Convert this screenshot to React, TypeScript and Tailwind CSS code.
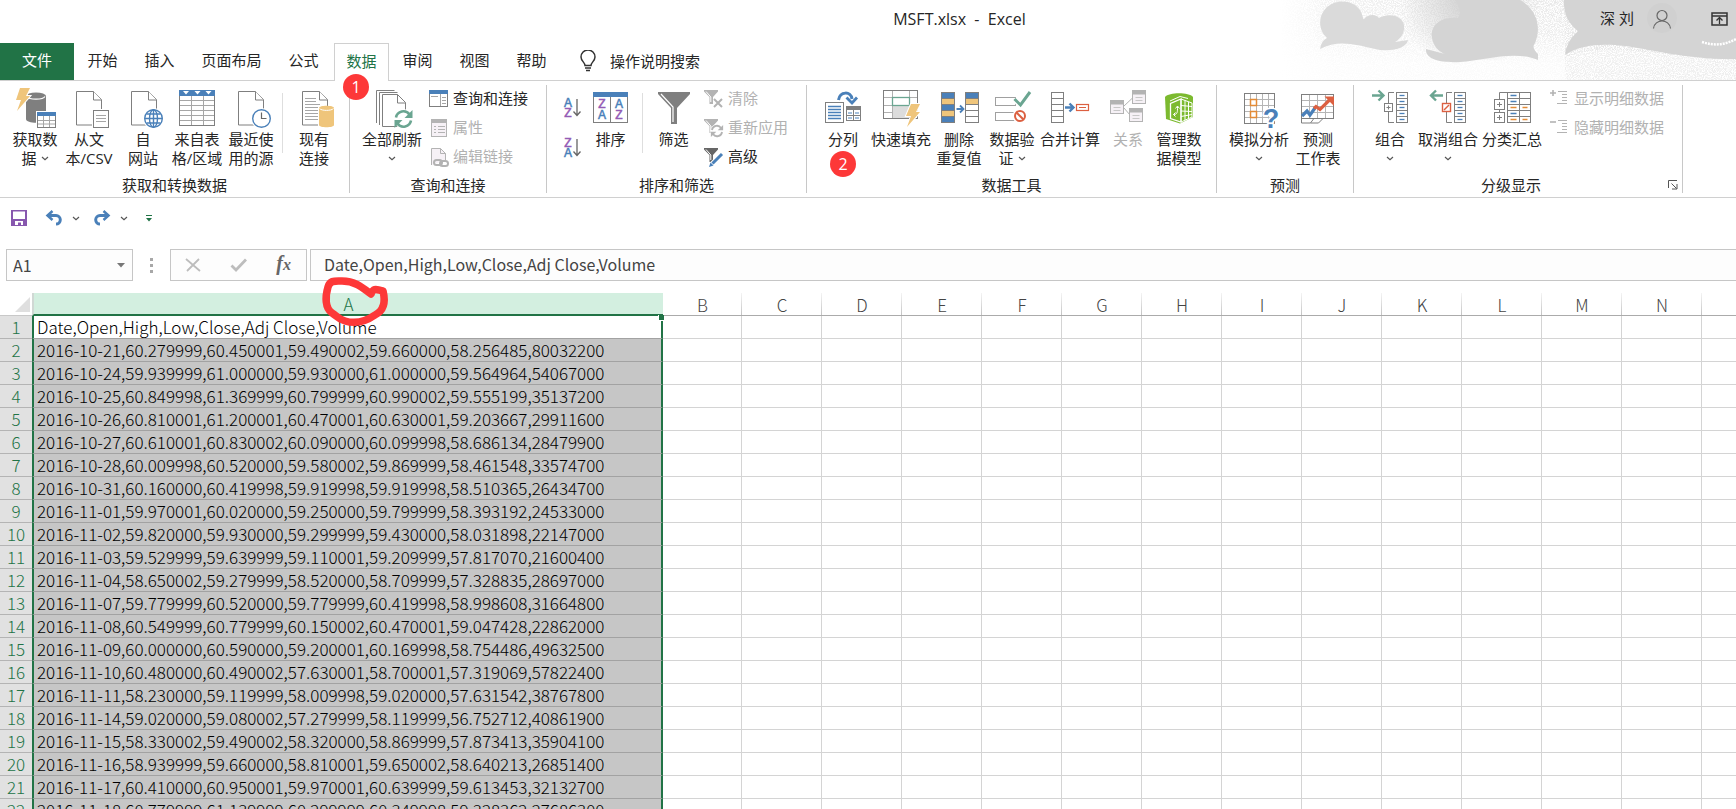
import type { ReactNode } from "react";

const TABS = ["开始", "插入", "页面布局", "公式", "数据", "审阅", "视图", "帮助"];

const COLUMNS = ["B", "C", "D", "E", "F", "G", "H", "I", "J", "K", "L", "M", "N", "O"];

const ROWS = [
  "Date,Open,High,Low,Close,Adj Close,Volume",
  "2016-10-21,60.279999,60.450001,59.490002,59.660000,58.256485,80032200",
  "2016-10-24,59.939999,61.000000,59.930000,61.000000,59.564964,54067000",
  "2016-10-25,60.849998,61.369999,60.799999,60.990002,59.555199,35137200",
  "2016-10-26,60.810001,61.200001,60.470001,60.630001,59.203667,29911600",
  "2016-10-27,60.610001,60.830002,60.090000,60.099998,58.686134,28479900",
  "2016-10-28,60.009998,60.520000,59.580002,59.869999,58.461548,33574700",
  "2016-10-31,60.160000,60.419998,59.919998,59.919998,58.510365,26434700",
  "2016-11-01,59.970001,60.020000,59.250000,59.799999,58.393192,24533000",
  "2016-11-02,59.820000,59.930000,59.299999,59.430000,58.031898,22147000",
  "2016-11-03,59.529999,59.639999,59.110001,59.209999,57.817070,21600400",
  "2016-11-04,58.650002,59.279999,58.520000,58.709999,57.328835,28697000",
  "2016-11-07,59.779999,60.520000,59.779999,60.419998,58.998608,31664800",
  "2016-11-08,60.549999,60.779999,60.150002,60.470001,59.047428,22862000",
  "2016-11-09,60.000000,60.590000,59.200001,60.169998,58.754486,49632500",
  "2016-11-10,60.480000,60.490002,57.630001,58.700001,57.319069,57822400",
  "2016-11-11,58.230000,59.119999,58.009998,59.020000,57.631542,38767800",
  "2016-11-14,59.020000,59.080002,57.279999,58.119999,56.752712,40861900",
  "2016-11-15,58.330002,59.490002,58.320000,58.869999,57.873413,35904100",
  "2016-11-16,58.939999,59.660000,58.810001,59.650002,58.640213,26851400",
  "2016-11-17,60.410000,60.950001,59.970001,60.639999,59.613453,32132700",
  "2016-11-18,60.779999,61.139999,60.299999,60.349998,59.328362,27686300",
];

const GRAY = "#7f7f7f";
const GOLD = "#efc57b";
const BLUE = "#4a80b9";
const GREEN = "#6aa591";
const RED = "#dc6041";
const ORANGE = "#e38b36";
const PURPLE = "#945bb5";
const MUTED = "#b3b3b3";

function Icon({ size = 40, children }: { size?: number; children: ReactNode }) {
  return (
    <svg
      width={size}
      height={size}
      viewBox={`0 0 ${size} ${size}`}
      fill="none"
      className="shrink-0 overflow-visible"
      aria-hidden="true"
    >
      {children}
    </svg>
  );
}

function Chevron() {
  return (
    <svg width="8" height="5" viewBox="0 0 8 5" fill="none" className="shrink-0" aria-hidden="true">
      <path d="M1 1l3 2.6L7 1" stroke="#555" strokeWidth="1.2" />
    </svg>
  );
}

function Page({ x = 7.5 }: { x?: number }) {
  return (
    <g transform={`translate(${x} 0)`} stroke={GRAY} fill="#fff">
      <path d="M0 3.5h17l8 8V37H0z" />
      <path d="M17 3.5v8.500h8" />
    </g>
  );
}

function Bolt({ x, y }: { x: number; y: number }) {
  return (
    <path
      transform={`translate(${x} ${y})`}
      d="M6 0h9l-4 8h4L2 23l4-11H1z"
      fill={GOLD}
      stroke="#fff"
      strokeWidth="2"
      paintOrder="stroke"
    />
  );
}

function RefreshArrows({ x, y, color, scale = 1 }: { x: number; y: number; color: string; scale?: number }) {
  return (
    <g transform={`translate(${x} ${y}) scale(${scale})`}>
      <circle r="10" fill="#fff" />
      <path d="M-7.500-1.500A7.500 7.500 0 0 1 6-4.500M7.500 1.500A7.500 7.500 0 0 1-6 4.500" stroke={color} strokeWidth="2.600" />
      <path d="M9-9v8H1zM-9 9V1h8z" fill={color} />
    </g>
  );
}

// A vertical strip of five equal cells, each with its own fill or a centre dash.
function Strip({ x, width, fills, dash }: { x: number; width: number; fills?: string[]; dash?: string }) {
  return (
    <g>
      {[0, 1, 2, 3, 4].map((i) => (
        <g key={i}>
          <rect x={x} y={4.5 + i * 6} width={width} height="6" fill={fills?.[i] ?? "#fff"} stroke={GRAY} />
          {dash && <path d={`M${x + 3} ${7.5 + i * 6}h${width - 6}`} stroke={dash} strokeWidth="1.300" />}
        </g>
      ))}
    </g>
  );
}

function GetDataIcon() {
  return (
    <Icon>
      <path d="M11 8v23c0 5 20 5 20 0V8z" fill={GRAY} />
      <ellipse cx="21" cy="8" rx="10" ry="3.500" fill={GRAY} />
      <path d="M12 8.500c2 3.500 16 3.500 18 0" stroke="#fff" strokeWidth="1.200" />
      <path d="M5 0h10l-4 8h4L2 23l4-11H1z" fill={GOLD} stroke="#fff" strokeWidth="2" paintOrder="stroke" />
      <rect x="21" y="23" width="21" height="18" fill="#fff" />
      <rect x="22.500" y="24.500" width="18" height="15" stroke={GRAY} />
      <path d="M22 24h19v4H22z" fill={BLUE} />
      <path d="M28.500 28v11M34.500 28v11M23 32.500h17M23 36h17" stroke="#a6a6a6" />
    </Icon>
  );
}

function CsvIcon() {
  return (
    <Icon>
      <Page />
      <rect x="23" y="21" width="18" height="20" fill="#fff" />
      <rect x="24.500" y="22.500" width="15" height="17" stroke={GRAY} />
      <path d="M27 27.500h10M27 30.500h10M27 33.500h10" stroke="#a6a6a6" />
    </Icon>
  );
}

function WebIcon() {
  return (
    <Icon>
      <Page x={8.5} />
      <circle cx="30.500" cy="30.500" r="10.500" fill="#fff" />
      <g stroke={BLUE} strokeWidth="1.400">
        <circle cx="30.500" cy="30.500" r="8.800" />
        <ellipse cx="30.500" cy="30.500" rx="4" ry="8.800" />
        <path d="M30.500 22v17M22 30.500h17M23.500 26h14M23.500 35h14" />
      </g>
    </Icon>
  );
}

function TableIcon() {
  return (
    <Icon>
      <rect x="2.500" y="2.500" width="35" height="35" fill="#fff" stroke={GRAY} />
      <path d="M14.500 8v29M26.500 8v29M3 12.500h34M3 17.500h34M3 22.500h34M3 27.500h34M3 32.500h34" stroke="#a6a6a6" />
      <path d="M2 2h36v6H2z" fill={BLUE} />
      <path d="M6 3h6L9 6.500zM17.500 3h6l-3 3.500zM28.500 3h6l-3 3.500z" fill="#fff" />
    </Icon>
  );
}

function RecentIcon() {
  return (
    <Icon>
      <Page />
      <circle cx="30.500" cy="30.500" r="10.500" fill="#fff" />
      <circle cx="30.500" cy="30.500" r="8.800" stroke={BLUE} strokeWidth="1.400" />
      <path d="M30.500 24.500v6h5" stroke="#666" strokeWidth="1.200" />
    </Icon>
  );
}

function ConnectionsIcon() {
  return (
    <Icon>
      <Page x={8.5} />
      <path d="M11 10.500h11M11 13.500h11M11 16.500h15M11 19.500h13M11 22.500h13M11 25.500h13M11 28.500h13M11 31.500h13" stroke="#a6a6a6" />
      <path d="M24 20v18c0 4 17 4 17 0V20z" fill="#fff" />
      <path d="M25 20v17c0 3 15 3 15 0V20c0-3-15-3-15 0z" fill={GOLD} />
      <path d="M25.500 20.500c2 2.500 12 2.500 14 0" stroke="#fff" />
    </Icon>
  );
}

function RefreshAllIcon() {
  return (
    <Icon>
      <path d="M4.500 35V2.500h18M7.500 37V4.500h18" stroke={GRAY} />
      <path d="M10.500 6.500h15l8 8v24h-23z" fill="#fff" stroke={GRAY} />
      <path d="M25.500 6.500v8.500h8" stroke={GRAY} />
      <RefreshArrows x={31.5} y={31} color={GREEN} />
    </Icon>
  );
}

function SortIcon() {
  return (
    <Icon>
      <rect x="2.500" y="4.500" width="34" height="30" fill="#fff" stroke={GRAY} />
      <path d="M2 4h35v5H2z" fill={BLUE} />
      <path d="M19.500 9v25" stroke={GRAY} />
      <g fontFamily="Liberation Sans, sans-serif" fontSize="12" textAnchor="middle" strokeWidth=".5">
        <text x="11" y="20" fill={PURPLE} stroke={PURPLE}>Z</text>
        <text x="11" y="31" fill={BLUE} stroke={BLUE}>A</text>
        <text x="28" y="20" fill={BLUE} stroke={BLUE}>A</text>
        <text x="28" y="31" fill={PURPLE} stroke={PURPLE}>Z</text>
      </g>
    </Icon>
  );
}

function SortDirectionIcon({ descending = false }: { descending?: boolean }) {
  return (
    <Icon size={20}>
      <g fontFamily="Liberation Sans, sans-serif" fontSize="12" textAnchor="middle" strokeWidth=".5">
        <text x="5" y="9" fill={descending ? PURPLE : BLUE} stroke={descending ? PURPLE : BLUE}>
          {descending ? "Z" : "A"}
        </text>
        <text x="5" y="19" fill={descending ? BLUE : PURPLE} stroke={descending ? BLUE : PURPLE}>
          {descending ? "A" : "Z"}
        </text>
      </g>
      <path d="M14 1v16M10.500 13.500l3.500 4 3.500-4" stroke="#666" strokeWidth="1.300" />
    </Icon>
  );
}

function FilterIcon() {
  return (
    <Icon>
      <path d="M4 4h32v2L23 20v16h-6V20L4 6z" fill={GRAY} />
      <path d="M7 6l12 13v15" stroke="#fff" strokeWidth="1.200" />
    </Icon>
  );
}

function SmallFunnel({ color }: { color: string }) {
  return (
    <g>
      <path d="M0 1h14v1.500L9 8v7H5.500V8L0 2.500z" fill={color} />
      <path d="M2 2.500L6.800 8v5" stroke="#fff" />
    </g>
  );
}

function TextToColumnsIcon() {
  return (
    <Icon>
      <rect x="2.500" y="14.500" width="18" height="20" fill="#fff" stroke={GRAY} />
      <path d="M5 18.500h13M5 21.500h13M5 24.500h13M5 27.500h13M5 30.500h13" stroke={BLUE} strokeWidth="1.300" />
      <rect x="23.500" y="18.500" width="14" height="14" fill="#fff" stroke={GRAY} />
      <path d="M23 18h15v4H23z" fill={GRAY} />
      <path d="M30.500 22v10M24 27.500h13" stroke={GRAY} />
      <path d="M25 25h4M32 25h4M25 30h4M32 30h4" stroke={BLUE} />
      <path d="M15.500 12C17 3 28 3 29 11" stroke={BLUE} strokeWidth="3" />
      <path d="M23.500 9.500L29 15l5-5.500" stroke={BLUE} strokeWidth="2.800" />
    </Icon>
  );
}

function FlashFillIcon() {
  return (
    <Icon>
      <rect x="2.500" y="2.500" width="34" height="28" fill="#fff" stroke={GRAY} />
      <path d="M11.500 3v27M28.500 3v27M3 9.500h33M3 17.500h33M3 24.500h8" stroke="#b0b0b0" />
      <path d="M12 18h16v12H12z" fill="#dcdcdc" />
      <rect x="11.500" y="9.500" width="17" height="8" fill="#fff" stroke={GREEN} strokeWidth="1.300" />
      <Bolt x={24} y={16} />
    </Icon>
  );
}

function RemoveDuplicatesIcon() {
  return (
    <Icon>
      <Strip x={2.5} width={13} fills={[BLUE, GOLD, BLUE, GOLD, BLUE]} />
      <Strip x={26.5} width={13} fills={[BLUE, GOLD, "#fff", "#fff", "#fff"]} />
      <path d="M17.500 21h6M21 17.500l3.500 3.500-3.500 3.500" stroke={BLUE} strokeWidth="1.800" />
    </Icon>
  );
}

function ValidationIcon() {
  return (
    <Icon>
      <rect x="3.500" y="9.500" width="20" height="8" fill="#fff" stroke="#a0a0a0" />
      <rect x="3.500" y="24.500" width="20" height="8" fill="#fff" stroke="#a0a0a0" />
      <path d="M22.500 11l6 6L38 4" stroke="#fff" strokeWidth="6" />
      <path d="M22.500 11l6 6L38 4" stroke={GREEN} strokeWidth="3" />
      <circle cx="28" cy="28" r="7.500" fill="#fff" />
      <circle cx="28" cy="28" r="5" stroke={RED} strokeWidth="2" />
      <path d="M24.500 24.500l7 7" stroke={RED} strokeWidth="2" />
    </Icon>
  );
}

function ConsolidateIcon() {
  return (
    <Icon>
      <Strip x={1.5} width={12} />
      <path d="M15 19.500h8M19.500 15.500l4 4-4 4" stroke={BLUE} strokeWidth="2.400" />
      <rect x="26.500" y="16.500" width="12" height="6" fill="#fff" stroke={RED} strokeWidth="1.200" />
      <path d="M29 19.500h7" stroke={RED} />
    </Icon>
  );
}

function RelationshipsIcon() {
  return (
    <Icon>
      <path d="M16 18l8.500-8M16 20l6 7" stroke={MUTED} />
      {[
        [2.5, 12.5],
        [24.5, 2.5],
        [21.5, 20.5],
      ].map(([x, y]) => (
        <g key={x} transform={`translate(${x} ${y})`}>
          <rect width="13" height="13" fill="#f6f1f6" stroke={MUTED} />
          <path d="M-.5-.5h14V4h-14z" fill={MUTED} />
          <path d="M3 7h7M3 10h7" stroke="#c8c8c8" />
        </g>
      ))}
    </Icon>
  );
}

function DataModelIcon() {
  return (
    <Icon>
      <path d="M6 9c4-5 24-5 28 0v20l-13 6.500L7 31z" fill="#7cba2f" />
      <path d="M11.500 15.500v15L22 34V11z" stroke="#fff" strokeWidth="1.300" />
      <path d="M22 11l11 4v14l-11 5zM26 12.500v20M29.500 14v17M22 17.500l11 1M22 23l11 .5M22 28.500l11-2" stroke="#fff" />
      <path d="M14.500 26.500c4 0 4-2 4-8M16.500 20.500l2-2.500 2 2.500M16.500 24.500l-2 2 2 2" stroke="#fff" />
      <path d="M11 13l10-4.500 8 2" stroke="#fff" />
    </Icon>
  );
}

function WhatIfIcon() {
  return (
    <Icon>
      <rect x="5.500" y="5.500" width="30" height="30" fill="#fff" stroke={GRAY} />
      <path d="M11.500 6v29M17.500 6v29M23.500 6v29M29.500 6v29M6 11.500h29M6 17.500h29M6 23.500h29M6 29.500h29" stroke="#b5b5b5" />
      <rect x="11.500" y="11.500" width="6" height="6" fill="#fff" stroke={ORANGE} strokeWidth="1.500" />
      <rect x="11.500" y="23.500" width="6" height="6" fill="#fff" stroke={ORANGE} strokeWidth="1.500" />
      <text
        x="32"
        y="40"
        textAnchor="middle"
        fontFamily="Liberation Sans, sans-serif"
        fontSize="27"
        fontWeight="bold"
        fill={BLUE}
        stroke="#fff"
        strokeWidth="3"
        paintOrder="stroke"
      >
        ?
      </text>
    </Icon>
  );
}

function ForecastIcon() {
  return (
    <Icon>
      <rect x="3.500" y="6.500" width="32" height="24" fill="#fff" stroke={GRAY} />
      <path d="M11.500 7v23M19.500 7v23M27.500 7v23M4 12.500h31M4 18.500h31M4 24.500h31" stroke="#b5b5b5" />
      <path d="M3.500 31v4h9l3-4M12.500 35h8l4-4" stroke={GRAY} />
      <path d="M4 28l5-5 3 4 5-7" stroke={BLUE} strokeWidth="3.200" />
      <path d="M16 20.500l2-2 4 3 10-10" stroke={RED} strokeWidth="3.200" />
      <path d="M26.500 8.500H36V18z" fill={RED} />
    </Icon>
  );
}

function GroupIcon() {
  return (
    <Icon>
      <path d="M24 4.500h-5.500v30H24" stroke={GRAY} />
      <rect x="14.500" y="15.500" width="8" height="8" fill="#fff" stroke={GRAY} />
      <path d="M16.500 19.500h4M18.500 17.500v4" stroke={GRAY} />
      <Strip x={26.5} width={11} dash={BLUE} />
      <path d="M2 7.500h11M8.500 2.500l5 5-5 5" stroke={GREEN} strokeWidth="2.400" />
    </Icon>
  );
}

function UngroupIcon() {
  return (
    <Icon>
      <path d="M24 4.500h-5.500v30H24" stroke={GRAY} />
      <rect x="14.500" y="15.500" width="8" height="8" fill="#fff" stroke={RED} strokeWidth="1.400" />
      <path d="M16 22l5-5" stroke={RED} strokeWidth="1.400" />
      <Strip x={26.5} width={11} dash={BLUE} />
      <path d="M3 7.500h12M8 2.500l-5 5 5 5" stroke={GREEN} strokeWidth="2.400" />
    </Icon>
  );
}

function SubtotalIcon() {
  return (
    <Icon>
      <path d="M15 4.500H7.500V30" stroke={GRAY} />
      <Strip x={15.5} width={12} />
      <Strip x={27.5} width={11} />
      <path d="M18.500 7.500h6M18.500 13.500h6M18.500 25.500h6" stroke={BLUE} strokeWidth="1.300" />
      <path d="M18.500 19.500h6M30.500 19.500h5M18.500 31.500h6M30.500 31.500h5" stroke={ORANGE} strokeWidth="1.500" />
      <rect x="2.500" y="11.500" width="10" height="10" fill="#fff" stroke={GRAY} />
      <rect x="2.500" y="24.500" width="10" height="10" fill="#fff" stroke={GRAY} />
      <path d="M5 16.500h5M7.500 14v5M5 29.500h5M7.500 27v5" stroke={GRAY} />
    </Icon>
  );
}

function QueriesIcon() {
  return (
    <Icon size={20}>
      <rect x=".5" y="1.500" width="18" height="16" fill="#fff" stroke={GRAY} />
      <path d="M0 1h19v4H0z" fill={BLUE} />
      <path d="M2 7.500h7M11.500 5v12M13 8.500h4M13 11.500h4M13 14.500h4" stroke="#a6a6a6" />
    </Icon>
  );
}

function PropertiesIcon() {
  return (
    <Icon size={20}>
      <rect x="2.500" y="1.500" width="15" height="17" fill="#f6f1f6" stroke={MUTED} />
      <path d="M2 1h16v4H2z" fill={MUTED} />
      <path d="M5 8.500h2M5 11.500h2M5 14.500h2M9 8.500h7M9 11.500h7M9 14.500h7" stroke={MUTED} />
    </Icon>
  );
}

function EditLinksIcon() {
  return (
    <Icon size={20}>
      <path d="M2.500 18V1.500h9l5 5V13" fill="#f6f1f6" stroke={MUTED} />
      <path d="M11.500 1.500v5h5" stroke={MUTED} />
      <rect x="5" y="13" width="8" height="5" rx="2.500" stroke={MUTED} strokeWidth="2" />
      <rect x="11" y="14" width="8" height="5" rx="2.500" stroke={MUTED} strokeWidth="2" />
    </Icon>
  );
}

function ClearIcon() {
  return (
    <Icon size={20}>
      <SmallFunnel color={MUTED} />
      <path d="M10 10l8 8M18 10l-8 8" stroke={MUTED} strokeWidth="2" />
    </Icon>
  );
}

function ReapplyIcon() {
  return (
    <Icon size={20}>
      <SmallFunnel color={MUTED} />
      <RefreshArrows x={13} y={13} color={MUTED} scale={0.68} />
    </Icon>
  );
}

function AdvancedIcon() {
  return (
    <Icon size={20}>
      <SmallFunnel color="#666" />
      <path d="M18 7L7 18" stroke="#fff" strokeWidth="5" />
      <path d="M18 7l-9.500 9.500" stroke={BLUE} strokeWidth="3" />
      <path d="M6.500 15.500L5 20l4.500-1.500z" fill={BLUE} />
    </Icon>
  );
}

function DetailIcon({ show }: { show: boolean }) {
  return (
    <Icon size={20}>
      <path d={show ? "M0 4h6M3 1v6" : "M0 4h6"} stroke={MUTED} strokeWidth="1.600" />
      <path d="M8 2.500h9M12 5.500h5M12 8.500h5M12 11.500h5M7 14.500h10" stroke={MUTED} />
    </Icon>
  );
}

function BigButton({
  icon,
  lines,
  width,
  menu,
  disabled,
  badge,
}: {
  icon: ReactNode;
  lines: string[];
  width: string;
  menu?: boolean;
  disabled?: boolean;
  badge?: string;
}) {
  return (
    <button
      disabled={disabled}
      className={`relative flex shrink-0 flex-col items-center pt-[3px] ${width} ${disabled ? "text-[#b1b1b1]" : ""}`}
    >
      {icon}
      <span className="mt-[2px] flex flex-col items-center leading-[19px] whitespace-nowrap">
        {lines.map((line, i) => (
          <span key={line} className="flex items-center gap-1">
            {line}
            {menu && i === 1 && <Chevron />}
          </span>
        ))}
        {menu && lines.length === 1 && (
          <span className="flex h-[19px] items-center">
            <Chevron />
          </span>
        )}
      </span>
      {badge && <Badge className="top-[66px] left-1/2 -translate-x-1/2">{badge}</Badge>}
    </button>
  );
}

function SmallButton({ icon, label, disabled }: { icon: ReactNode; label: string; disabled?: boolean }) {
  return (
    <button
      disabled={disabled}
      className={`flex h-[29px] items-center gap-1 pb-[2px] whitespace-nowrap ${disabled ? "text-[#b1b1b1]" : ""}`}
    >
      {icon}
      {label}
    </button>
  );
}

function Badge({ className, children }: { className: string; children: ReactNode }) {
  return (
    <span
      className={`absolute z-10 flex size-[26px] items-center justify-center rounded-full bg-[#fd3838] text-base text-white ${className}`}
    >
      {children}
    </span>
  );
}

function Group({
  label,
  width,
  inset = "pl-2",
  launcher,
  children,
}: {
  label: string;
  width: string;
  inset?: string;
  launcher?: boolean;
  children: ReactNode;
}) {
  return (
    <section
      aria-label={label}
      className={`flex shrink-0 flex-col justify-between border-r border-[#c8c8c8] ${width}`}
    >
      <div className={`flex ${inset}`}>{children}</div>
      <div className="flex items-center pb-[2px] leading-3">
        <span className="flex-1 text-center">{label}</span>
        {launcher && (
          <button aria-label={`${label}设置`} className="mr-1">
            <svg width="10" height="10" viewBox="0 0 10 10" fill="none">
              <path d="M.5 8V.5H9M3.500 3.500l5 5M9 4v5H4" stroke="#555" />
            </svg>
          </button>
        )}
      </div>
    </section>
  );
}

function Separator() {
  return <div className="mt-2 ml-1 h-[60px] w-px shrink-0 bg-[#dedede]" />;
}

function Ribbon() {
  return (
    <div className="relative flex h-[118px] border-y border-[#d0d0d0] bg-white py-1 text-[15px] text-[#262626]">
      <Group label="获取和转换数据" width="w-[350px]">
        <BigButton icon={<GetDataIcon />} lines={["获取数", "据"]} width="w-[54px]" menu />
        <BigButton icon={<CsvIcon />} lines={["从文", "本/CSV"]} width="w-[54px]" />
        <BigButton icon={<WebIcon />} lines={["自", "网站"]} width="w-[54px]" />
        <BigButton icon={<TableIcon />} lines={["来自表", "格/区域"]} width="w-[54px]" />
        <BigButton icon={<RecentIcon />} lines={["最近使", "用的源"]} width="w-[54px]" />
        <Separator />
        <BigButton icon={<ConnectionsIcon />} lines={["现有", "连接"]} width="w-[62px]" />
      </Group>
      <Group label="查询和连接" width="w-[197px]">
        <BigButton icon={<RefreshAllIcon />} lines={["全部刷新"]} width="w-[68px]" menu />
        <div className="ml-[3px] flex flex-col">
          <SmallButton icon={<QueriesIcon />} label="查询和连接" />
          <SmallButton icon={<PropertiesIcon />} label="属性" disabled />
          <SmallButton icon={<EditLinksIcon />} label="编辑链接" disabled />
        </div>
      </Group>
      <Group label="排序和筛选" width="w-[260px]" inset="pl-4">
        <div className="flex flex-col gap-5 pt-[13px]">
          <button aria-label="升序">
            <SortDirectionIcon />
          </button>
          <button aria-label="降序">
            <SortDirectionIcon descending />
          </button>
        </div>
        <BigButton icon={<SortIcon />} lines={["排序"]} width="w-[55px]" />
        <Separator />
        <BigButton icon={<FilterIcon />} lines={["筛选"]} width="w-[61px]" />
        <div className="flex flex-col">
          <SmallButton icon={<ClearIcon />} label="清除" disabled />
          <SmallButton icon={<ReapplyIcon />} label="重新应用" disabled />
          <SmallButton icon={<AdvancedIcon />} label="高级" />
        </div>
      </Group>
      <Group label="数据工具" width="w-[410px]" inset="pl-[6px]">
        <BigButton icon={<TextToColumnsIcon />} lines={["分列"]} width="w-[60px]" badge="2" />
        <BigButton icon={<FlashFillIcon />} lines={["快速填充"]} width="w-[56px]" />
        <BigButton icon={<RemoveDuplicatesIcon />} lines={["删除", "重复值"]} width="w-[60px]" />
        <BigButton icon={<ValidationIcon />} lines={["数据验", "证"]} width="w-[46px]" menu />
        <BigButton icon={<ConsolidateIcon />} lines={["合并计算"]} width="w-[70px]" />
        <BigButton icon={<RelationshipsIcon />} lines={["关系"]} width="w-[46px]" disabled />
        <BigButton icon={<DataModelIcon />} lines={["管理数", "据模型"]} width="w-[56px]" />
      </Group>
      <Group label="预测" width="w-[137px]">
        <BigButton icon={<WhatIfIcon />} lines={["模拟分析"]} width="w-[68px]" menu />
        <BigButton icon={<ForecastIcon />} lines={["预测", "工作表"]} width="w-[50px]" />
      </Group>
      <Group label="分级显示" width="w-[329px]" launcher>
        <BigButton icon={<GroupIcon />} lines={["组合"]} width="w-[56px]" menu />
        <BigButton icon={<UngroupIcon />} lines={["取消组合"]} width="w-[60px]" menu />
        <BigButton icon={<SubtotalIcon />} lines={["分类汇总"]} width="w-[68px]" />
        <div className="ml-1 flex flex-col">
          <SmallButton icon={<DetailIcon show />} label="显示明细数据" disabled />
          <SmallButton icon={<DetailIcon show={false} />} label="隐藏明细数据" disabled />
        </div>
      </Group>
    </div>
  );
}

function CloudArt() {
  return (
    <svg
      width="456"
      height="80"
      viewBox="0 0 456 80"
      className="pointer-events-none absolute top-0 right-0"
      aria-hidden="true"
    >
      <defs>
        <filter id="grain" x="0" y="0" width="100%" height="100%">
          <feTurbulence type="fractalNoise" baseFrequency="0.9" numOctaves="2" seed="4" />
          <feColorMatrix values="0 0 0 0 .78  0 0 0 0 .78  0 0 0 0 .78  3 3 0 0 -2.500" />
        </filter>
        <linearGradient id="fadeX" x1="0" x2="1">
          <stop offset="0" stopColor="#000" />
          <stop offset=".12" stopColor="#888" />
          <stop offset=".4" stopColor="#ccc" />
          <stop offset="1" stopColor="#fff" />
        </linearGradient>
        <linearGradient id="fadeY" x1="0" y1="0" x2="0" y2="1">
          <stop offset="0" stopColor="#fff" stopOpacity="0" />
          <stop offset=".4" stopColor="#fff" stopOpacity=".2" />
          <stop offset=".8" stopColor="#fff" stopOpacity=".8" />
        </linearGradient>
        <radialGradient id="shade" cx="190" cy="0" r="70" gradientUnits="userSpaceOnUse">
          <stop offset="0" stopColor="#cfcfcf" />
          <stop offset="1" stopColor="#cfcfcf" stopOpacity="0" />
        </radialGradient>
        <mask id="grainMask">
          <rect width="456" height="80" fill="url(#fadeX)" />
        </mask>
      </defs>
      <g mask="url(#grainMask)">
        <rect width="456" height="80" filter="url(#grain)" />
      </g>
      <path d="M0 0h285v80H0z" fill="url(#fadeY)" />
      <path d="M285 58c30-18 110 0 171 2v20H285z" fill="#fff" opacity=".35" />
      <path d="M110 0h150v60H110z" fill="url(#shade)" />
      <path
        d="M40 49q1-8 7-11C38 30 38 16 46 8c10-10 28-8 34 2 3 5 3 10 4 9 4-5 12-5 15-1 9-5 23-3 25 7 1 9-4 14-9 17l13-2c-2 9-16 11-28 10-20-4-40-12-60-1z"
        fill="#dadada"
      />
      <path
        d="M146 49c-1 12 19 14 34 13 25-2 55-12 78-2v-6q-6-6-4-9c8-15 4-35-14-45h-65q8 12 3 18c-20-2-28 10-26 20s8 14 13 16z"
        fill="#d4d4d4"
      />
      <path d="M284 0c-1 15 6 25 14 31q-12 11-13 24c15-10 35-12 60-9 30 4 65 14 111 13V0z" fill="#d4d4d4" />
      <path d="M422 42q18 6 34-3" stroke="#fff" strokeWidth="2.500" strokeDasharray="2 1" fill="none" />
      <circle cx="382" cy="18" r="15" fill="#d0d0d0" />
    </svg>
  );
}

function TitleBar() {
  return (
    <div className="relative flex h-[43px] items-center pb-[6px] text-[#262626]">
      <div className="w-[323px] shrink-0" />
      <h1 className="flex-1 text-center text-base whitespace-pre">MSFT.xlsx  -  Excel</h1>
      <div className="flex w-[140px] shrink-0 items-center pl-1">
        <span className="text-[15px] whitespace-nowrap">深 刘</span>
        <svg width="20" height="20" viewBox="0 0 20 20" fill="none" className="ml-[18px]" aria-hidden="true">
          <circle cx="10" cy="6.500" r="5" stroke="#666" strokeWidth="1.200" />
          <path d="M1.500 19.500c1-10 16-10 17 0" stroke="#666" strokeWidth="1.200" />
        </svg>
        <button aria-label="功能区显示选项" className="ml-[39px]">
          <svg width="17" height="14" viewBox="0 0 17 14" fill="none">
            <path d="M1 1h15v12H1zM1 4h15" stroke="#333" strokeWidth="1.500" />
            <path d="M8.500 12V6M5.500 8.500l3-3 3 3" stroke="#333" strokeWidth="1.300" />
          </svg>
        </button>
      </div>
    </div>
  );
}

function TabBar() {
  return (
    <nav className="relative z-10 -mb-px flex h-[38px] text-[15px] text-[#262626]">
      <button className="mb-px w-[74px] bg-[#217346] pb-[2px] text-white">文件</button>
      {TABS.map((tab) =>
        tab === "数据" ? (
          <button
            key={tab}
            className="relative ml-[2px] w-[55px] border border-b-0 border-[#d0d0d0] bg-white pb-[2px] text-[#217346]"
          >
            {tab}
            <Badge className="top-[30px] left-2">1</Badge>
          </button>
        ) : (
          <button key={tab} className={tab.length > 2 ? "w-[87px] pb-[3px]" : "w-[57px] pb-[3px]"}>
            {tab}
          </button>
        ),
      )}
      <button className="ml-5 flex items-center gap-[14px] pb-[2px]">
        <svg width="16" height="22" viewBox="0 0 16 22" fill="none" aria-hidden="true">
          <path
            d="M5 15.500c0-3-4-4.500-4-8.500a7 7 0 0 1 14 0c0 4-4 5.500-4 8.500zM5 18h6M6 20.500h4"
            stroke="#333"
            strokeWidth="1.500"
          />
        </svg>
        操作说明搜索
      </button>
    </nav>
  );
}

function QuickAccess() {
  return (
    <div className="flex h-[51px] items-center pb-[11px] pl-[11px]">
      <button aria-label="保存">
        <svg width="16" height="16" viewBox="0 0 16 16">
          <path d="M0 0h16v16H0z" fill="#8757ae" />
          <path d="M2 1.500h12V9H2zM4 11h8v4h-2v-2.500H7V15H4z" fill="#fff" />
        </svg>
      </button>
      <button aria-label="撤消" className="ml-[18px]">
        <svg width="18" height="16" viewBox="0 0 18 16" fill="none">
          <path d="M2.500 5.500H11a4.300 4.300 0 0 1 0 8.600" stroke={BLUE} strokeWidth="3" />
          <path d="M7.500 1l-5 4.500 5 4.500" stroke={BLUE} strokeWidth="2.500" />
        </svg>
      </button>
      <button aria-label="撤消列表" className="ml-[9px]">
        <Chevron />
      </button>
      <button aria-label="恢复" className="ml-[13px]">
        <svg width="18" height="16" viewBox="0 0 18 16" fill="none">
          <path d="M15.500 5.500H7a4.300 4.300 0 0 0 0 8.600" stroke={BLUE} strokeWidth="3" />
          <path d="M10.500 1l5 4.500-5 4.500" stroke={BLUE} strokeWidth="2.500" />
        </svg>
      </button>
      <button aria-label="恢复列表" className="ml-[9px]">
        <Chevron />
      </button>
      <button aria-label="自定义快速访问工具栏" className="ml-[18px]">
        <svg width="6" height="7" viewBox="0 0 6 7">
          <path d="M0 0h6v1H0zM0 3h6L3 6.500z" fill="#217346" />
        </svg>
      </button>
    </div>
  );
}

function FormulaBar() {
  return (
    <div className="flex h-8 pl-[6px] font-[Noto_Sans_CJK_SC,sans-serif] text-[#444]">
      <div className="flex w-[127px] items-center border border-[#c6c6c6] bg-[#fdfdfd] pr-[7px]">
        <input
          aria-label="名称框"
          defaultValue="A1"
          className="w-0 flex-1 bg-transparent pl-[6px] text-base outline-none"
        />
        <button aria-label="名称列表">
          <svg width="8" height="5" viewBox="0 0 8 5">
            <path d="M0 0h8L4 4.500z" fill="#777" />
          </svg>
        </button>
      </div>
      <div className="flex w-[37px] flex-col items-center justify-center gap-[3px]">
        <i className="size-[3px] bg-[#a8a8a8]" />
        <i className="size-[3px] bg-[#a8a8a8]" />
        <i className="size-[3px] bg-[#a8a8a8]" />
      </div>
      <div className="mr-[3px] flex w-[137px] items-center justify-between border border-[#c6c6c6] bg-[#fdfdfd] pr-[15px] pl-[14px]">
        <button aria-label="取消">
          <svg width="16" height="14" viewBox="0 0 16 14" fill="none">
            <path d="M1 1l14 12M14 1L2 13" stroke="#bdbdbd" strokeWidth="1.800" />
          </svg>
        </button>
        <button aria-label="输入">
          <svg width="17" height="14" viewBox="0 0 17 14" fill="none">
            <path d="M1.500 7.500l4.500 4.500L16 1.500" stroke="#bdbdbd" strokeWidth="2.800" />
          </svg>
        </button>
        <button aria-label="插入函数" className="font-[Liberation_Serif,serif] text-xl leading-5 font-bold text-[#666] italic">
          f<span className="text-base">x</span>
        </button>
      </div>
      <input
        aria-label="编辑栏"
        defaultValue={ROWS[0]}
        className="min-w-0 flex-1 border border-r-0 border-[#c6c6c6] bg-[#fdfdfd] px-[13px] pb-[2px] text-base outline-none"
      />
    </div>
  );
}

function Sheet() {
  return (
    <table className="mt-3 w-[1782px] table-fixed border-separate border-spacing-0 font-[Noto_Sans_CJK_SC,sans-serif] text-[17px] font-light">
      <colgroup>
        <col className="w-[32px]" />
        <col className="w-[631px]" />
        {COLUMNS.map((name) => (
          <col key={name} className={name === "B" ? "w-[79px]" : "w-[80px]"} />
        ))}
      </colgroup>
      <thead>
        <tr className="h-[23px] leading-[21px] text-[#444]">
          <th className="border-b border-[#c8c8c8] p-0">
            <svg width="15" height="15" viewBox="0 0 15 15" className="mr-[2px] ml-auto" aria-hidden="true">
              <path d="M15 0v15H0z" fill="#dfdfdf" />
            </svg>
          </th>
          <th className="relative border-b-2 border-l-2 border-b-[#217346] border-l-[#d0d8d4] bg-[#d3efe0] p-0 font-light text-[#217346]">
            A
            <svg
              width="66"
              height="48"
              viewBox="0 0 66 48"
              fill="none"
              className="pointer-events-none absolute -top-4 left-[288px] z-10 overflow-visible"
              aria-hidden="true"
            >
              <path
                d="M6 10C8 3 13 4 20 4c13 0 20 6 29 13 3-7 6-4 12-3 3 12 0 20-8 24-10 7-20 9-30 6-7-2-8-5-13-8C3 31 3 20 6 10z"
                stroke="#fd3838"
                strokeWidth="7.500"
                strokeLinejoin="round"
              />
            </svg>
          </th>
          {COLUMNS.map((name) => (
            <th
              key={name}
              className="border-b border-[#ababab] bg-[linear-gradient(#f4f4f4,#c4c4c4)] bg-[length:1px_100%] bg-right bg-no-repeat p-0 font-light"
            >
              {name}
            </th>
          ))}
        </tr>
      </thead>
      <tbody>
        {ROWS.map((row, i) => (
          <tr key={row} className="h-[23px] leading-[22px]">
            <th className="border-b border-[#b4b4b4] bg-[#e1e1e1] p-0 text-center font-light text-[#217346]">{i + 1}</th>
            <td
              className={`relative border-x-2 border-b border-x-[#217346] border-b-[#a2a2a2] px-[3px] py-0 whitespace-nowrap text-black ${
                i === 0 ? "bg-white" : "bg-[#c6c6c6]"
              }`}
            >
              {row}
              {i === 0 && (
                <i className="absolute -top-px -right-[3px] size-[6px] border-b border-l border-white bg-[#217346]" />
              )}
            </td>
            {COLUMNS.map((name) => (
              <td key={name} className="border-r border-b border-[#d4d4d4] p-0" />
            ))}
          </tr>
        ))}
      </tbody>
    </table>
  );
}

export default function App() {
  return (
    <main className="h-screen overflow-hidden bg-white font-[Open_Sans,Noto_Sans_CJK_SC,sans-serif]">
      <header className="relative">
        <CloudArt />
        <TitleBar />
        <TabBar />
      </header>
      <Ribbon />
      <QuickAccess />
      <FormulaBar />
      <Sheet />
    </main>
  );
}
